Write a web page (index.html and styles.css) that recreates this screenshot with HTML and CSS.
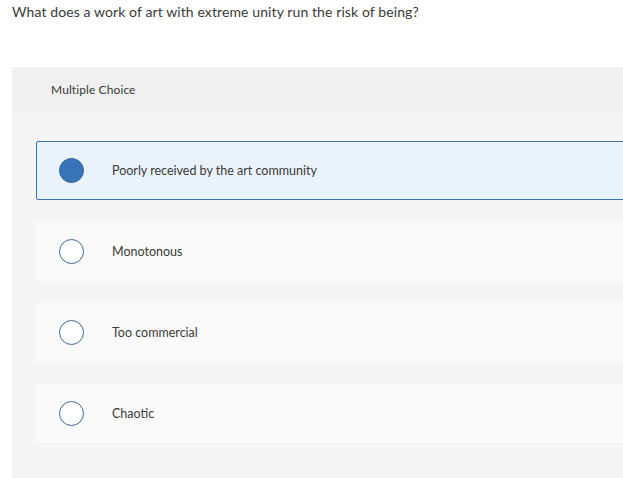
FILE: index.html
```html
<!DOCTYPE html>
<html>
<head>
<meta charset="utf-8">
<link rel="stylesheet" href="styles.css">
</head>
<body>
<div class="page">
  <p class="question">What does a work of art with extreme unity run the risk of being?</p>
  <div class="panel">
    <div class="panel-head">Multiple Choice</div>
    <div class="panel-body">
      <div class="option selected"><span class="radio"></span><span class="label">Poorly received by the art community</span></div>
      <div class="option"><span class="radio"></span><span class="label">Monotonous</span></div>
      <div class="option"><span class="radio"></span><span class="label">Too commercial</span></div>
      <div class="option"><span class="radio"></span><span class="label">Chaotic</span></div>
    </div>
  </div>
</div>
</body>
</html>
```

FILE: styles.css
```css
html, body {
  margin: 0;
  padding: 0;
  background: #ffffff;
  overflow: hidden;
}
.page {
  font-family: Lato, "Open Sans", Arial, sans-serif;
  color: #333333;
  padding-left: 12px;
}
.question {
  margin: 0;
  padding-top: 4px;
  font-size: 14px;
  line-height: 16px;
  height: 63px;
  color: #3a3a3a;
  letter-spacing: 0.1px;
}
.panel {
  background: #f5f5f5;
  margin-right: -20px;
  overflow: hidden;
}
.panel-head {
  background: #f0f0f0;
  height: 45px;
  display: flex;
  align-items: center;
  padding-left: 39px;
  font-size: 12px;
  color: #3a3a3a;
  letter-spacing: 0.1px;
}
.panel-body {
  padding: 29px 0 40px 24px;
  display: flex;
  flex-direction: column;
  gap: 22px;
}
.option {
  height: 59px;
  background: #fafafa;
  border: 1px solid #fafafa;
  border-radius: 2px;
  display: flex;
  align-items: center;
  box-sizing: border-box;
  padding-left: 22px;
  font-size: 12.5px;
  color: #3a3a3a;
}
.option.selected {
  background: #eaf2fb;
  border-color: #3c73b6;
}
.radio {
  width: 25px;
  height: 25px;
  box-sizing: border-box;
  border: 1.5px solid #3d6a9c;
  border-radius: 50%;
  background: #ffffff;
  flex: none;
}
.selected .radio {
  background: #3a74b8;
  border-color: #32639c;
}
.label {
  margin-left: 28px;
}
```
